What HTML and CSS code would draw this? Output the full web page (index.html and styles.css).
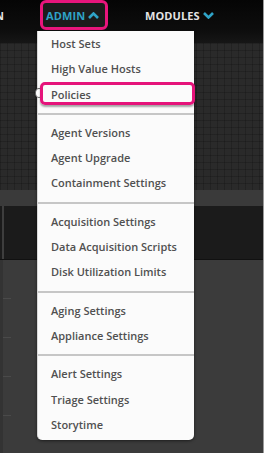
FILE: index.html
```html
<!DOCTYPE html>
<html lang="en">
<head>
  <meta charset="UTF-8">
  <title>Admin menu</title>
  <meta name="viewport" content="width=device-width, initial-scale=1.0">
  <link rel="stylesheet" href="styles.css">
</head>
<body>

<div class="page">
  <div class="topbar">
    <div class="nav-cut"><span>INVESTIGATION</span></div>
    <div class="nav-item admin">
      ADMIN
      <svg class="caret" width="11" height="7" viewBox="0 0 11 7"><path d="M1 6 L5.5 1.5 L10 6" fill="none" stroke="#2fa3c7" stroke-width="2.6"/></svg>
    </div>
    <div class="nav-item modules">
      MODULES
      <svg class="caret" width="11" height="7" viewBox="0 0 11 7"><path d="M1 1 L5.5 5.5 L10 1" fill="none" stroke="#2fa3c7" stroke-width="2.6"/></svg>
    </div>
  </div>

  <div class="canvas"></div>
  <div class="band-light"></div>
  <div class="band-dark"><div class="rule"></div></div>
  <div class="lower">
    <div class="row"></div>
    <div class="row"></div>
    <div class="row"></div>
    <div class="row"></div>
    <div class="row"></div>
  </div>

  <ul class="menu">
    <li>Host Sets</li>
    <li>High Value Hosts</li>
    <li class="picked"><span class="dot"></span>Policies</li>
    <li class="sep"></li>
    <li>Agent Versions</li>
    <li>Agent Upgrade</li>
    <li>Containment Settings</li>
    <li class="sep"></li>
    <li>Acquisition Settings</li>
    <li>Data Acquisition Scripts</li>
    <li>Disk Utilization Limits</li>
    <li class="sep"></li>
    <li>Aging Settings</li>
    <li>Appliance Settings</li>
    <li class="sep"></li>
    <li>Alert Settings</li>
    <li>Triage Settings</li>
    <li>Storytime</li>
  </ul>
</div>

</body>
</html>
```

FILE: styles.css
```css
* {
  margin: 0;
  padding: 0;
  box-sizing: border-box;
}

body, html {
  font-family: 'Open Sans', sans-serif;
  background: #2b2b2b;
  height: 100%;
  overflow: hidden;
}

.page {
  position: relative;
  width: 264px;
  height: 453px;
  display: flex;
  flex-direction: column;
  border-right: 1px solid #9a9a9a;
}

.topbar {
  height: 43px;
  flex: none;
  display: flex;
  align-items: flex-start;
  background: linear-gradient(to bottom, #050505, #0d0d0d 70%, #161616);
  font-weight: 700;
  font-size: 11px;
  letter-spacing: 0.1px;
}

.nav-cut {
  width: 4px;
  height: 30px;
  overflow: hidden;
  display: flex;
  justify-content: flex-end;
  align-items: center;
  color: #e6e6e6;
}

.nav-cut span {
  white-space: nowrap;
}

.nav-item {
  display: flex;
  align-items: center;
  height: 30px;
  white-space: nowrap;
}

.admin {
  margin-left: 36px;
  width: 68px;
  padding-left: 3px;
  border: 3px solid #e8157c;
  border-radius: 6px;
  background: #1b1b1b;
  color: #2fa3c7;
}

.modules {
  margin-left: 37px;
  color: #e4e4e4;
}

.caret {
  margin-left: 3px;
}

.canvas {
  height: 147px;
  flex: none;
  background-color: #2a2a2a;
  background-image:
    repeating-linear-gradient(to right, rgba(0,0,0,0.18) 0 1px, transparent 1px 7px),
    repeating-linear-gradient(to bottom, rgba(0,0,0,0.18) 0 1px, transparent 1px 7px);
}

.band-light {
  height: 16px;
  flex: none;
  background: #3a3a3a;
}

.band-dark {
  height: 54px;
  flex: none;
  background: #1b1b1b;
  border-bottom: 1px solid #111;
  padding-left: 2px;
}

.rule {
  width: 2px;
  height: 100%;
  background: #3e3e3e;
}

.lower {
  flex: 1;
  background: #3b3b3b;
  border-left: 3px solid #333;
  display: flex;
  flex-direction: column;
  padding-top: 38px;
  gap: 38px;
}

.lower .row {
  width: 8px;
  height: 1px;
  background: #4a4a4a;
}

.menu {
  position: absolute;
  top: 31px;
  left: 37px;
  width: 157px;
  list-style: none;
  background: #fbfbfb;
  border-left: 1px solid #d8d8d8;
  border-radius: 0 0 5px 5px;
  box-shadow: 0 1px 3px rgba(0, 0, 0, 0.5);
  padding-bottom: 3px;
}

.menu li {
  position: relative;
  height: 25.3px;
  line-height: 25.3px;
  padding-left: 13px;
  font-size: 11px;
  font-weight: 600;
  color: #505050;
  white-space: nowrap;
}

.menu li.sep {
  height: 2px;
  margin: 6px 0 5px;
  padding: 0;
  background: #c6c6c6;
}

.menu li.picked::after {
  content: "";
  position: absolute;
  left: 2px;
  right: -1px;
  top: 0;
  bottom: 2px;
  border: 3px solid #e5137a;
  border-radius: 5px;
  box-shadow: 0 2px 2px rgba(0, 0, 0, 0.35);
}

.dot {
  position: absolute;
  left: -3px;
  top: 6px;
  width: 8px;
  height: 10px;
  border-radius: 50%;
  background: #fff;
  border: 1px solid #666;
}
```
